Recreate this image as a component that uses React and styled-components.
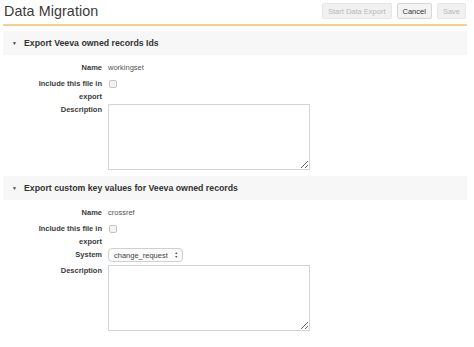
import styled, { createGlobalStyle } from "styled-components";

const GlobalStyle = createGlobalStyle`
    body {
        margin: 0;
        background: #ffffff;
        font-family: "Liberation Sans", Arial, sans-serif;
        color: #333;
    }
`;

const sections = [
    {
        title: "Export Veeva owned records Ids",
        name: "workingset",
    },
    {
        title: "Export custom key values for Veeva owned records",
        name: "crossref",
        system: "change_request",
    },
];

export default function App() {
    return (
        <>
            <GlobalStyle />
            <SCPage>
                <SCTopBar>
                    <SCTitle>Data Migration</SCTitle>
                    <SCActions>
                        <SCButton disabled>Start Data Export</SCButton>
                        <SCButton>Cancel</SCButton>
                        <SCButton disabled>Save</SCButton>
                    </SCActions>
                </SCTopBar>

                {sections.map(section => (
                    <SCSection key={section.name}>
                        <SCSectionHeader>
                            <SCCaret>▼</SCCaret>
                            {section.title}
                        </SCSectionHeader>
                        <SCForm>
                            <SCLabel $gap>Name</SCLabel>
                            <SCValue>{section.name}</SCValue>

                            <SCLabel>Include this file in<br />export</SCLabel>
                            <div><SCCheckbox type="checkbox" /></div>

                            {section.system && (
                                <>
                                    <SCLabel $gap>System</SCLabel>
                                    <div>
                                        <SCSelectWrap>
                                            <SCSelect defaultValue={section.system}>
                                                <option value={section.system}>{section.system}</option>
                                            </SCSelect>
                                            <SCSelectArrows>
                                                <span>▲</span>
                                                <span>▼</span>
                                            </SCSelectArrows>
                                        </SCSelectWrap>
                                    </div>
                                </>
                            )}

                            <SCLabel>Description</SCLabel>
                            <div><SCTextArea /></div>
                        </SCForm>
                    </SCSection>
                ))}
            </SCPage>
        </>
    );
}

const SCPage = styled.div`
    padding: 0 7px 0 3px;
`;

const SCTopBar = styled.div`
    height: 24px;
    display: flex;
    align-items: center;
    justify-content: space-between;
    border-bottom: 2px solid #f4d18e;
    margin-bottom: 1px;
`;

const SCTitle = styled.h1`
    margin: 0 0 2px 1px;
    font-size: 14.3px;
    font-weight: 400;
    color: #3a3a3a;
    letter-spacing: 0.1px;
`;

const SCActions = styled.div`
    display: flex;
    gap: 5px;
    padding-right: 1px;
    margin-bottom: 2px;
`;

const SCButton = styled.button`
    height: 16px;
    padding: 0 5px;
    font-family: "Liberation Sans", Arial, sans-serif;
    font-size: 7.5px;
    color: ${p => (p.disabled ? "#b8b8b8" : "#333")};
    background: ${p => (p.disabled ? "#f1f1f1" : "#f3f3f3")};
    border: 1px solid ${p => (p.disabled ? "#e6e6e6" : "#d6d6d6")};
    border-radius: 2px;
`;

const SCSection = styled.section`
    margin-top: 5px;

    & + & {
        margin-top: 6px;
    }
`;

const SCSectionHeader = styled.div`
    height: 24px;
    display: flex;
    align-items: center;
    padding-left: 9px;
    background: #f7f7f7;
    font-size: 8.75px;
    font-weight: 700;
    color: #333;
`;

const SCCaret = styled.span`
    font-size: 5px;
    width: 12px;
    color: #444;
`;

const SCForm = styled.div`
    display: grid;
    grid-template-columns: 99px 1fr;
    column-gap: 6px;
    padding-top: 6px;
    font-size: 7.5px;
    line-height: 13px;
`;

const SCLabel = styled.div`
    text-align: right;
    font-weight: 700;
    color: #3a3a3a;
    padding-bottom: ${p => (p.$gap ? "3px" : "0")};
`;

const SCValue = styled.div`
    color: #555;
`;

const SCCheckbox = styled.input`
    appearance: none;
    display: block;
    width: 8px;
    height: 8px;
    margin: 3px 0 0 1px;
    background: #f3f3f3;
    border: 1px solid #c4c4c4;
    border-radius: 2px;
`;

const SCSelectWrap = styled.div`
    position: relative;
    display: inline-block;
`;

const SCSelect = styled.select`
    appearance: none;
    display: block;
    height: 14px;
    width: 75px;
    padding: 0 0 0 5px;
    font-family: "Liberation Sans", Arial, sans-serif;
    font-size: 7.5px;
    color: #444;
    background: #fbfbfb;
    border: 1px solid #d0d0d0;
    border-radius: 4px;
`;

const SCSelectArrows = styled.div`
    position: absolute;
    right: 5px;
    top: 3px;
    display: flex;
    flex-direction: column;
    font-size: 3.5px;
    line-height: 4px;
    color: #444;
    pointer-events: none;
`;

const SCTextArea = styled.textarea`
    display: block;
    box-sizing: border-box;
    width: 202px;
    height: 66px;
    margin-top: 1px;
    border: 1px solid #d4d4d4;
    resize: both;
`;
